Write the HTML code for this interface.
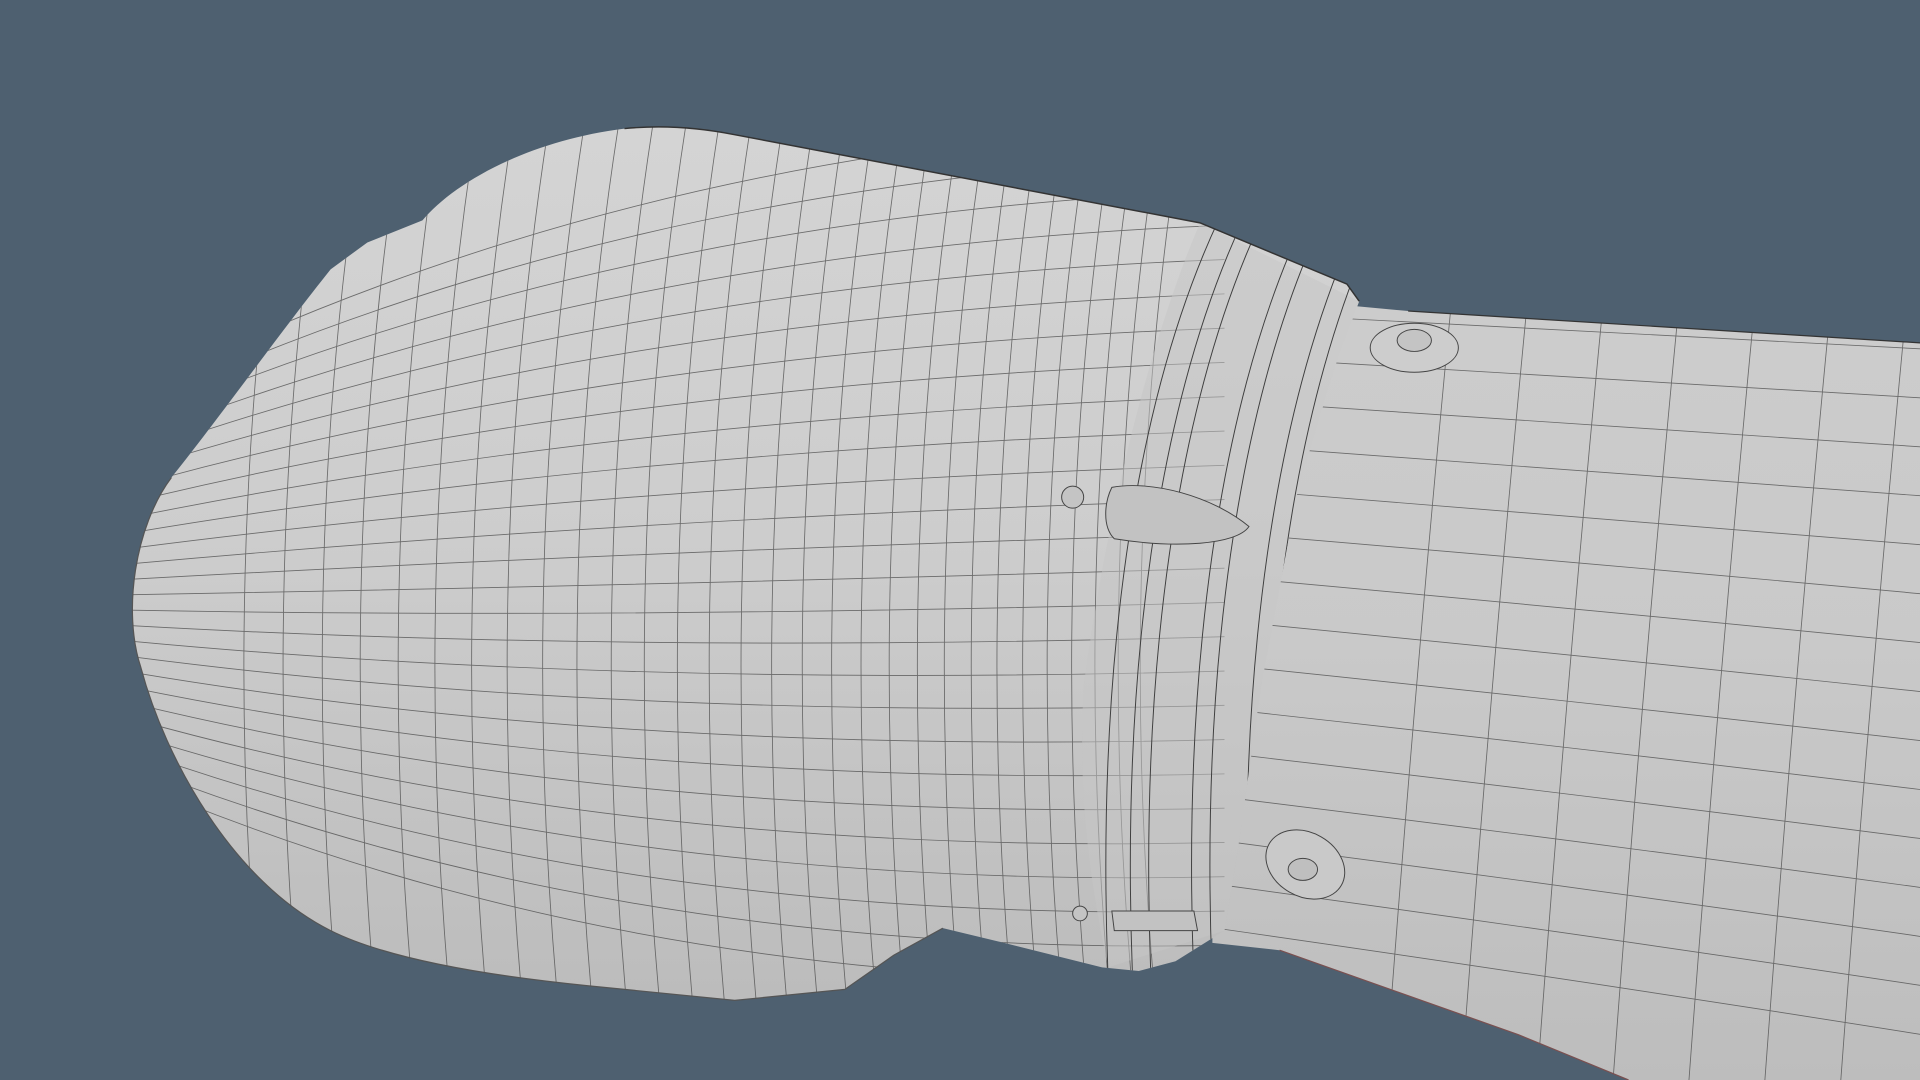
<!DOCTYPE html>
<html><head><meta charset="utf-8"><style>
html,body{margin:0;padding:0;background:#4e6070;overflow:hidden}
svg{display:block}
</style></head><body>
<svg width="1920" height="1080" viewBox="0 0 1568 882" xmlns="http://www.w3.org/2000/svg">
<defs>
<linearGradient id="gh" x1="0" y1="0" x2="0" y2="1">
<stop offset="0" stop-color="#d6d6d6"/><stop offset="0.5" stop-color="#cdcdcd"/><stop offset="1" stop-color="#b9b9b9"/>
</linearGradient>
<linearGradient id="gf" x1="0" y1="0" x2="0" y2="1">
<stop offset="0" stop-color="#cfcfcf"/><stop offset="0.6" stop-color="#c9c9c9"/><stop offset="1" stop-color="#bdbdbd"/>
</linearGradient>
<clipPath id="ch"><path d="M510,105 C540,102 570,104 600,110 L980,182 L1100,232 L1110,246 L1090,300 L1060,400 L1030,560 L1010,700 L1000,760 L960,785 L930,793 L900,790 L820,770 L770,758 L730,780 L690,808 L600,817 L480,805 C380,795 310,780 270,760 C190,720 135,620 115,545 C100,500 110,430 140,390 C180,340 230,270 270,220 L300,198 L345,180 C370,150 430,115 510,105 Z"/></clipPath>
<clipPath id="cf"><path d="M1000,240 L1150,254 L1568,280 L1568,882 L1330,882 L1240,845 L1045,776 L990,770 Z"/></clipPath>
</defs>
<rect width="1568" height="882" fill="#4e6070"/>
<g clip-path="url(#cf)"><rect width="1568" height="882" fill="url(#gf)"/>
<g stroke="#4a4a4a" stroke-width="0.7" fill="none" opacity="0.75">
<path d="M1185,250 Q1155,560 1130,900"/><path d="M1247,250 Q1217,560 1192,900"/><path d="M1309,250 Q1279,560 1254,900"/><path d="M1371,250 Q1341,560 1316,900"/><path d="M1433,250 Q1403,560 1378,900"/><path d="M1495,250 Q1465,560 1440,900"/><path d="M1557,250 Q1527,560 1502,900"/>
<path d="M1000,255 Q1300,270 1570,285"/><path d="M1000,291 Q1300,308 1570,325"/><path d="M1000,327 Q1300,346 1570,365"/><path d="M1000,363 Q1300,384 1570,405"/><path d="M1000,399 Q1300,422 1570,445"/><path d="M1000,435 Q1300,460 1570,485"/><path d="M1000,471 Q1300,498 1570,525"/><path d="M1000,507 Q1300,536 1570,565"/><path d="M1000,543 Q1300,574 1570,605"/><path d="M1000,579 Q1300,612 1570,645"/><path d="M1000,615 Q1300,650 1570,685"/><path d="M1000,651 Q1300,688 1570,725"/><path d="M1000,687 Q1300,726 1570,765"/><path d="M1000,723 Q1300,764 1570,805"/><path d="M1000,759 Q1300,802 1570,845"/>
</g></g>
<g clip-path="url(#ch)"><rect width="1568" height="882" fill="url(#gh)"/>
<g stroke="#4a4a4a" stroke-width="0.7" fill="none" opacity="0.75">
<path d="M240,60 Q170,470 220,900"/><path d="M272,60 Q202,470 252,900"/><path d="M304,60 Q234,470 284,900"/><path d="M335,60 Q265,470 315,900"/><path d="M366,60 Q296,470 346,900"/><path d="M396,60 Q326,470 376,900"/><path d="M426,60 Q356,470 406,900"/><path d="M455,60 Q385,470 435,900"/><path d="M484,60 Q414,470 464,900"/><path d="M512,60 Q442,470 492,900"/><path d="M540,60 Q470,470 520,900"/><path d="M567,60 Q497,470 547,900"/><path d="M594,60 Q524,470 574,900"/><path d="M620,60 Q550,470 600,900"/><path d="M646,60 Q576,470 626,900"/><path d="M671,60 Q601,470 651,900"/><path d="M696,60 Q626,470 676,900"/><path d="M720,60 Q650,470 700,900"/><path d="M744,60 Q674,470 724,900"/><path d="M767,60 Q697,470 747,900"/><path d="M790,60 Q720,470 770,900"/><path d="M812,60 Q742,470 792,900"/><path d="M834,60 Q764,470 814,900"/><path d="M855,60 Q785,470 835,900"/><path d="M876,60 Q806,470 856,900"/><path d="M896,60 Q826,470 876,900"/><path d="M916,60 Q846,470 896,900"/><path d="M935,60 Q865,470 915,900"/><path d="M954,60 Q884,470 934,900"/><path d="M972,60 Q902,470 952,900"/>
<path d="M90,330 Q500,120 1000,100"/><path d="M90,342 Q500,148 1000,128"/><path d="M90,354 Q500,175 1000,156"/><path d="M90,366 Q500,203 1000,184"/><path d="M90,378 Q500,230 1000,212"/><path d="M90,390 Q500,258 1000,240"/><path d="M90,402 Q500,286 1000,268"/><path d="M90,414 Q500,313 1000,296"/><path d="M90,426 Q500,341 1000,324"/><path d="M90,438 Q500,368 1000,352"/><path d="M90,450 Q500,396 1000,380"/><path d="M90,462 Q500,424 1000,408"/><path d="M90,474 Q500,451 1000,436"/><path d="M90,486 Q500,479 1000,464"/><path d="M90,498 Q500,506 1000,492"/><path d="M90,510 Q500,534 1000,520"/><path d="M90,522 Q500,562 1000,548"/><path d="M90,534 Q500,589 1000,576"/><path d="M90,546 Q500,617 1000,604"/><path d="M90,558 Q500,644 1000,632"/><path d="M90,570 Q500,672 1000,660"/><path d="M90,582 Q500,700 1000,688"/><path d="M90,594 Q500,727 1000,716"/><path d="M90,606 Q500,755 1000,744"/><path d="M90,618 Q500,782 1000,772"/><path d="M90,630 Q500,810 1000,800"/>
</g>
<path d="M980,182 C930,300 900,450 885,560 C880,650 890,720 905,790 L1000,760 L1010,700 L1030,560 L1060,400 L1090,300 L1110,246 Z" fill="#c6c6c6" opacity="0.5"/>
<g stroke="#3e3e3e" stroke-width="0.8" fill="none">
<path d="M995,180 C925,330 895,550 905,800"/><path d="M1015,180 C945,330 915,550 925,800"/><path d="M1030,180 C960,330 930,550 940,800"/><path d="M1065,180 C995,330 965,550 975,800"/><path d="M1080,180 C1010,330 980,550 990,800"/><path d="M1110,180 C1040,330 1010,550 1020,800"/><path d="M1125,180 C1055,330 1025,550 1035,800"/>
</g>
</g>
<path d="M510,105 C540,102 570,104 600,110 L980,182 L1100,232 L1110,246" stroke="#333" stroke-width="1.2" fill="none"/>
<path d="M140,390 C110,430 100,500 115,545 C135,620 190,720 270,760 C310,780 380,795 480,805 L600,817 L690,808 L730,780 L770,758" stroke="#555" stroke-width="1" fill="none"/>
<path d="M1150,254 L1568,280" stroke="#333" stroke-width="1" fill="none"/>
<path d="M1045,776 L1240,845 L1330,882" stroke="#7a5050" stroke-width="1" fill="none"/>
<g stroke="#444" stroke-width="0.8">
<ellipse cx="1155" cy="284" rx="36" ry="20" fill="#cdcdcd"/>
<ellipse cx="1155" cy="278" rx="14" ry="9" fill="#c4c4c4"/>
<ellipse cx="1066" cy="706" rx="34" ry="26" fill="#c9c9c9" transform="rotate(30 1066 706)"/>
<ellipse cx="1064" cy="710" rx="12" ry="9" fill="#bfbfbf"/>
<circle cx="876" cy="406" r="9" fill="#c4c4c4"/>
<circle cx="882" cy="746" r="6" fill="#c4c4c4"/>
<path d="M908,398 C940,392 990,405 1020,430 C1010,445 960,448 910,440 C900,430 902,410 908,398 Z" fill="#c2c2c2"/>
<path d="M908,744 L975,744 L978,760 L910,760 Z" fill="#c2c2c2"/>
</g>
</svg>
</body></html>
